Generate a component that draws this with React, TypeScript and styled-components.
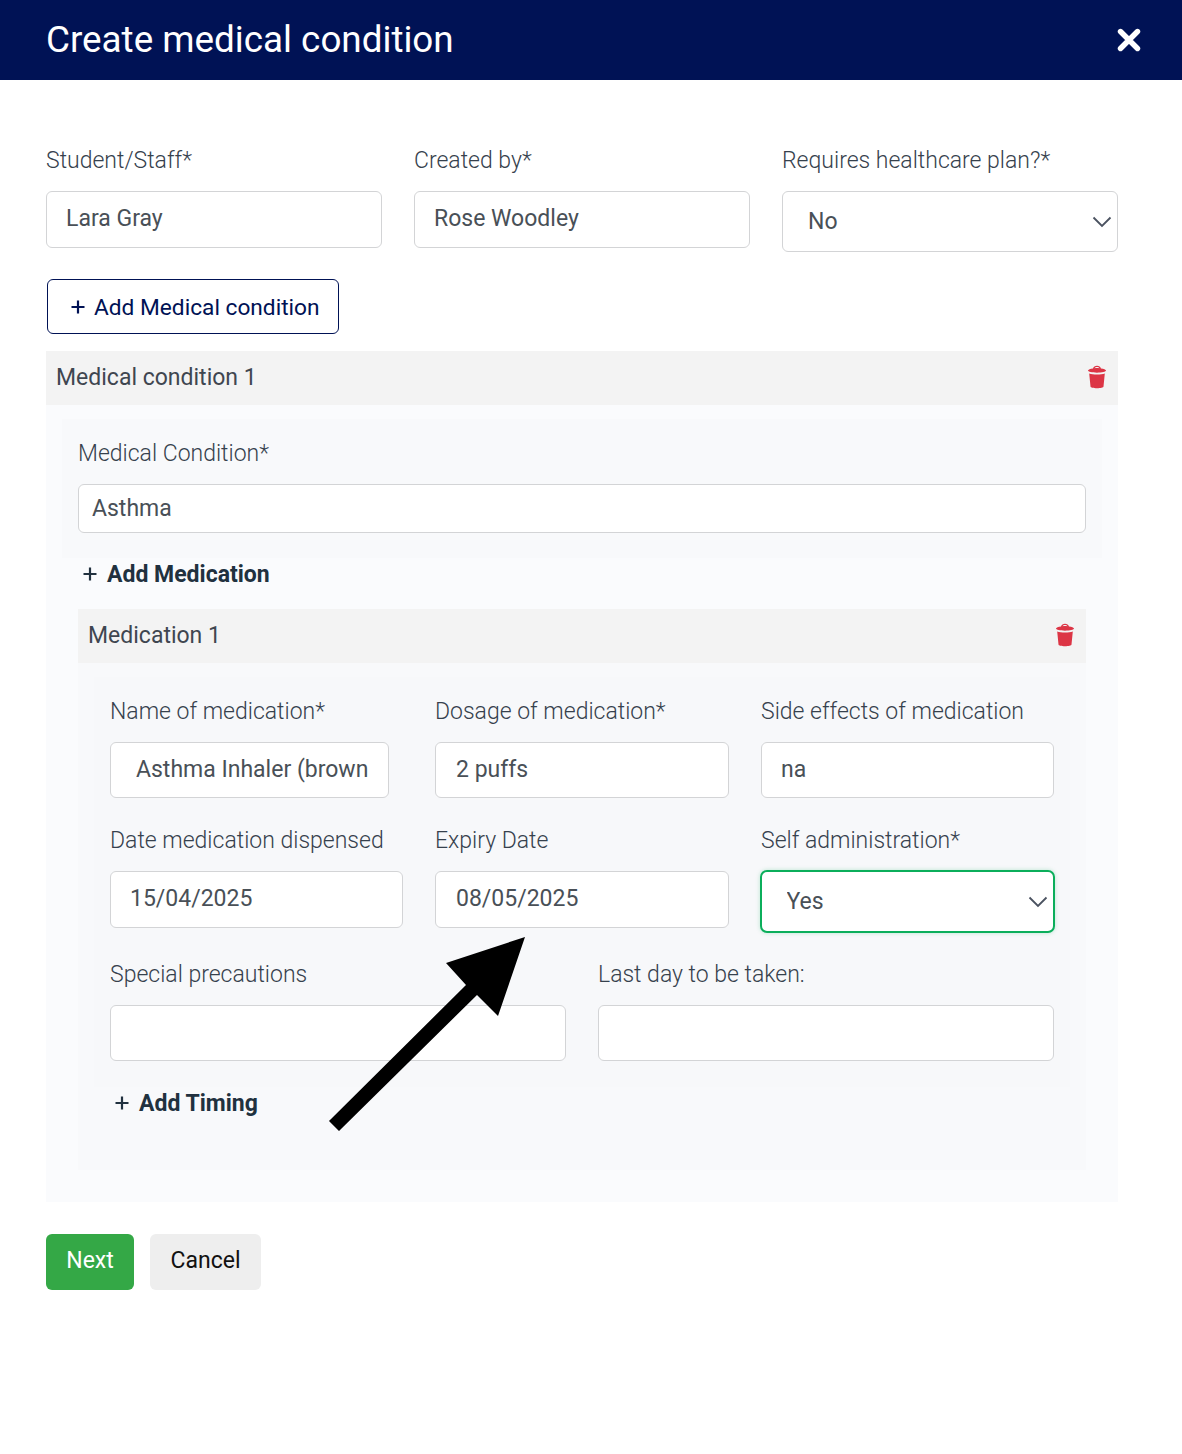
import React, { FC } from 'react';
import styled, { createGlobalStyle } from 'styled-components';

const GlobalStyle = createGlobalStyle`
  html, body {
    margin: 0;
    padding: 0;
    background: #fff;
    font-family: Roboto, "Liberation Sans", sans-serif;
  }
  * {
    box-sizing: border-box;
  }
`;

const Page = styled.div`
  position: relative;
  width: 1182px;
  height: 1454px;
  overflow: hidden;
`;

const Header = styled.header`
  display: flex;
  height: 80px;
  padding: 0 41px 0 46px;
  align-items: center;
  justify-content: space-between;
  background: #001255;
`;

const Title = styled.h1`
  margin: 0;
  color: #fff;
  font-size: 36.8px;
  font-weight: 400;
  line-height: 80px;
`;

const Body = styled.div`
  display: flex;
  padding: 64px 64px 0 46px;
  flex-direction: column;
`;

const Stack = styled.div`
  display: flex;
  flex-direction: column;
  gap: 26px;
`;

const Grid = styled.div<{ $columns: string; $gap?: number }>`
  display: grid;
  grid-template-columns: ${p => p.$columns};
  column-gap: 32px;
  row-gap: ${p => p.$gap ?? 0}px;
  align-items: start;
`;

const Field = styled.div`
  display: flex;
  flex-direction: column;
  align-items: flex-start;
`;

const Label = styled.label`
  height: 31px;
  margin: 1px 0 15px;
  color: #36414d;
  font-size: 23px;
  font-weight: 300;
  line-height: 31px;
  white-space: nowrap;
`;

const Input = styled.input<{ $height?: number; $width?: number; $pad?: number; $padEnd?: number; $lift?: number }>`
  width: ${p => (p.$width ? `${p.$width}px` : '100%')};
  height: ${p => p.$height ?? 57}px;
  padding: 0 ${p => p.$padEnd ?? p.$pad ?? 19}px ${p => p.$lift ?? 2}px ${p => p.$pad ?? 19}px;
  border: 1px solid #d3d4d6;
  border-radius: 6px;
  outline: none;
  background: #fff;
  color: #495057;
  font-family: inherit;
  font-size: 23px;
  font-weight: 400;
`;

const SelectWrap = styled.div<{ $focused?: boolean }>`
  position: relative;
  width: ${p => (p.$focused ? 'calc(100% + 2px)' : '100%')};
  margin: ${p => (p.$focused ? '-1px' : '0')};
`;

const Select = styled.select<{ $focused?: boolean }>`
  display: block;
  width: 100%;
  height: ${p => (p.$focused ? 63 : 61)}px;
  padding: 0 40px 0 ${p => (p.$focused ? 24.5 : 25)}px;
  appearance: none;
  border: ${p => (p.$focused ? '2.5px solid #0bae5b' : '1px solid #d3d4d6')};
  border-radius: ${p => (p.$focused ? 7 : 6)}px;
  outline: none;
  background: #fff;
  box-shadow: ${p => (p.$focused ? '0 0 4px rgba(11, 174, 91, 0.25)' : 'none')};
  color: #495057;
  font-family: inherit;
  font-size: 23px;
`;

const Chevron = styled.svg<{ $focused?: boolean }>`
  position: absolute;
  top: 50%;
  right: ${p => (p.$focused ? 7 : 6)}px;
  width: 20px;
  height: 12px;
  transform: translateY(-50%);
  fill: none;
  stroke: #4a5260;
  stroke-width: 1.8;
`;

const OutlineButton = styled.button`
  display: flex;
  width: 292px;
  height: 55px;
  margin: 27px 0 17px 1px;
  padding: 1px 0 0 22px;
  align-items: center;
  gap: 8px;
  border: 1.5px solid #001255;
  border-radius: 6px;
  background: #fff;
  color: #001255;
  font-family: inherit;
  font-size: 22.7px;
  font-weight: 400;
`;

const PlusIcon = styled.svg`
  width: 16px;
  height: 16px;
  flex: none;
  fill: none;
  stroke: currentColor;
  stroke-width: 2.2;
`;

const SectionHead = styled.div`
  display: flex;
  height: 54px;
  padding: 0 12px 2px 10px;
  align-items: center;
  justify-content: space-between;
  background: #f3f3f3;
  color: #3f4650;
  font-size: 23px;
`;

const SectionBody = styled.div<{ $pad: string; $tone: string }>`
  padding: ${p => p.$pad};
  background: ${p => p.$tone};
`;

const Nested = styled.div`
  margin: 0 16px;
`;

const InnerPanel = styled.div<{ $pad: string; $tone: string }>`
  padding: ${p => p.$pad};
  background: ${p => p.$tone};
`;

const LinkRow = styled.div<{ $margin: string }>`
  display: flex;
  height: 31px;
  margin: ${p => p.$margin};
  padding-top: 1px;
  align-items: center;
  gap: 9px;
  color: #21313f;
  font-size: 23px;
  font-weight: 700;
`;

const Footer = styled.div`
  display: flex;
  margin-top: 32px;
  gap: 16px;
`;

const ActionButton = styled.button<{ $primary?: boolean }>`
  width: ${p => (p.$primary ? 88 : 111)}px;
  height: 56px;
  padding: 0 0 4px;
  border: 0;
  border-radius: 6px;
  background: ${p => (p.$primary ? '#34a846' : '#eeeeee')};
  color: ${p => (p.$primary ? '#fff' : '#111')};
  font-family: inherit;
  font-size: 23px;
  font-weight: 400;
`;

const ArrowOverlay = styled.svg`
  position: absolute;
  top: 0;
  left: 0;
  width: 1182px;
  height: 1454px;
  pointer-events: none;
`;

const CloseIcon: FC = () => (
  <svg width="24" height="24" viewBox="0 0 24 24" fill="none" stroke="#fff" strokeWidth="5.4" strokeLinecap="round">
    <path d="M3.5 3.5 20.5 20.5M20.5 3.5 3.5 20.5" />
  </svg>
);

const TrashIcon: FC = () => (
  <svg width="18" height="24" viewBox="0 0 18 24" fill="#dc3545">
    <path d="M0 5.6C0 4.6 2.4 3.8 5 3.4 5.6 1.6 7 .8 9 .8s3.4.8 4 2.6c2.6.4 5 1.2 5 2.2 0 1.2-4 2.1-9 2.1S0 6.8 0 5.6Zm6.6-2.4c.7-.1 1.6-.1 2.4-.1s1.700 0 2.400.1C11 2.400 10.100 2 9 2s-2 .4-2.400 1.200Z" />
    <path d="M1.200 8.400C3.200 9.200 6 9.500 9 9.500s5.800-.3 7.800-1.100L15.500 21.500c-.1 1.100-3 1.700-6.500 1.700s-6.400-.6-6.500-1.700L1.200 8.400Z" />
  </svg>
);

const Plus: FC = () => (
  <PlusIcon viewBox="0 0 16 16">
    <path d="M8 1.500v13M1.500 8h13" />
  </PlusIcon>
);

const SelectField: FC<{ value: string; focused?: boolean }> = ({ value, focused }) => (
  <SelectWrap $focused={focused}>
    <Select $focused={focused} defaultValue={value}>
      <option>{value}</option>
    </Select>
    <Chevron $focused={focused} viewBox="0 0 20 12">
      <path d="M1.500 1.500 10 10l8.500-8.500" />
    </Chevron>
  </SelectWrap>
);

const App: FC = () => (
  <Page>
    <GlobalStyle />
    <Header>
      <Title>Create medical condition</Title>
      <CloseIcon />
    </Header>
    <Body>
      <Grid $columns="336px 336px 336px">
        <Field>
          <Label>Student/Staff*</Label>
          <Input readOnly value="Lara Gray" />
        </Field>
        <Field>
          <Label>Created by*</Label>
          <Input readOnly value="Rose Woodley" />
        </Field>
        <Field>
          <Label>Requires healthcare plan?*</Label>
          <SelectField value="No" />
        </Field>
      </Grid>
      <OutlineButton>
        <Plus />
        Add Medical condition
      </OutlineButton>
      <SectionHead>
        Medical condition 1
        <TrashIcon />
      </SectionHead>
      <SectionBody $pad="14px 16px 32px" $tone="#fafbfd">
        <InnerPanel $pad="18px 16px 25px" $tone="#f8f9fb">
          <Field>
            <Label>Medical Condition*</Label>
            <Input readOnly value="Asthma" $height={49} $pad={13} $lift={0} />
          </Field>
        </InnerPanel>
        <LinkRow $margin="0 0 20px 20px">
          <Plus />
          Add Medication
        </LinkRow>
        <Nested>
          <SectionHead>
            Medication 1
            <TrashIcon />
          </SectionHead>
          <SectionBody $pad="14px 16px 52px" $tone="#f8f9fb">
            <InnerPanel $pad="18px 16px 26px" $tone="#f7f8fa">
              <Stack>
                <Grid $columns="293px 294px 293px" $gap={26}>
                  <Field>
                    <Label>Name of medication*</Label>
                    <Input readOnly value="Asthma Inhaler (brown inhaler)" $width={279} $pad={25} $padEnd={15} $height={56} />
                  </Field>
                  <Field>
                    <Label>Dosage of medication*</Label>
                    <Input readOnly value="2 puffs" $height={56} $pad={20} />
                  </Field>
                  <Field>
                    <Label>Side effects of medication</Label>
                    <Input readOnly value="na" $height={56} />
                  </Field>
                  <Field>
                    <Label>Date medication dispensed</Label>
                    <Input readOnly value="15/04/2025" />
                  </Field>
                  <Field>
                    <Label>Expiry Date</Label>
                    <Input readOnly value="08/05/2025" $pad={20} />
                  </Field>
                  <Field>
                    <Label>Self administration*</Label>
                    <SelectField value="Yes" focused />
                  </Field>
                </Grid>
                <Grid $columns="456px 456px">
                  <Field>
                    <Label>Special precautions</Label>
                    <Input readOnly value="" $height={56} />
                  </Field>
                  <Field>
                    <Label>Last day to be taken:</Label>
                    <Input readOnly value="" $height={56} />
                  </Field>
                </Grid>
              </Stack>
            </InnerPanel>
            <LinkRow $margin="0 0 0 20px">
              <Plus />
              Add Timing
            </LinkRow>
          </SectionBody>
        </Nested>
      </SectionBody>
      <Footer>
        <ActionButton $primary>Next</ActionButton>
        <ActionButton>Cancel</ActionButton>
      </Footer>
    </Body>
    <ArrowOverlay viewBox="0 0 1182 1454">
      <path d="M525 937 446 963 466 985 329 1121 339 1131 477 995 498 1016Z" fill="#000" />
    </ArrowOverlay>
  </Page>
);

export default App;
